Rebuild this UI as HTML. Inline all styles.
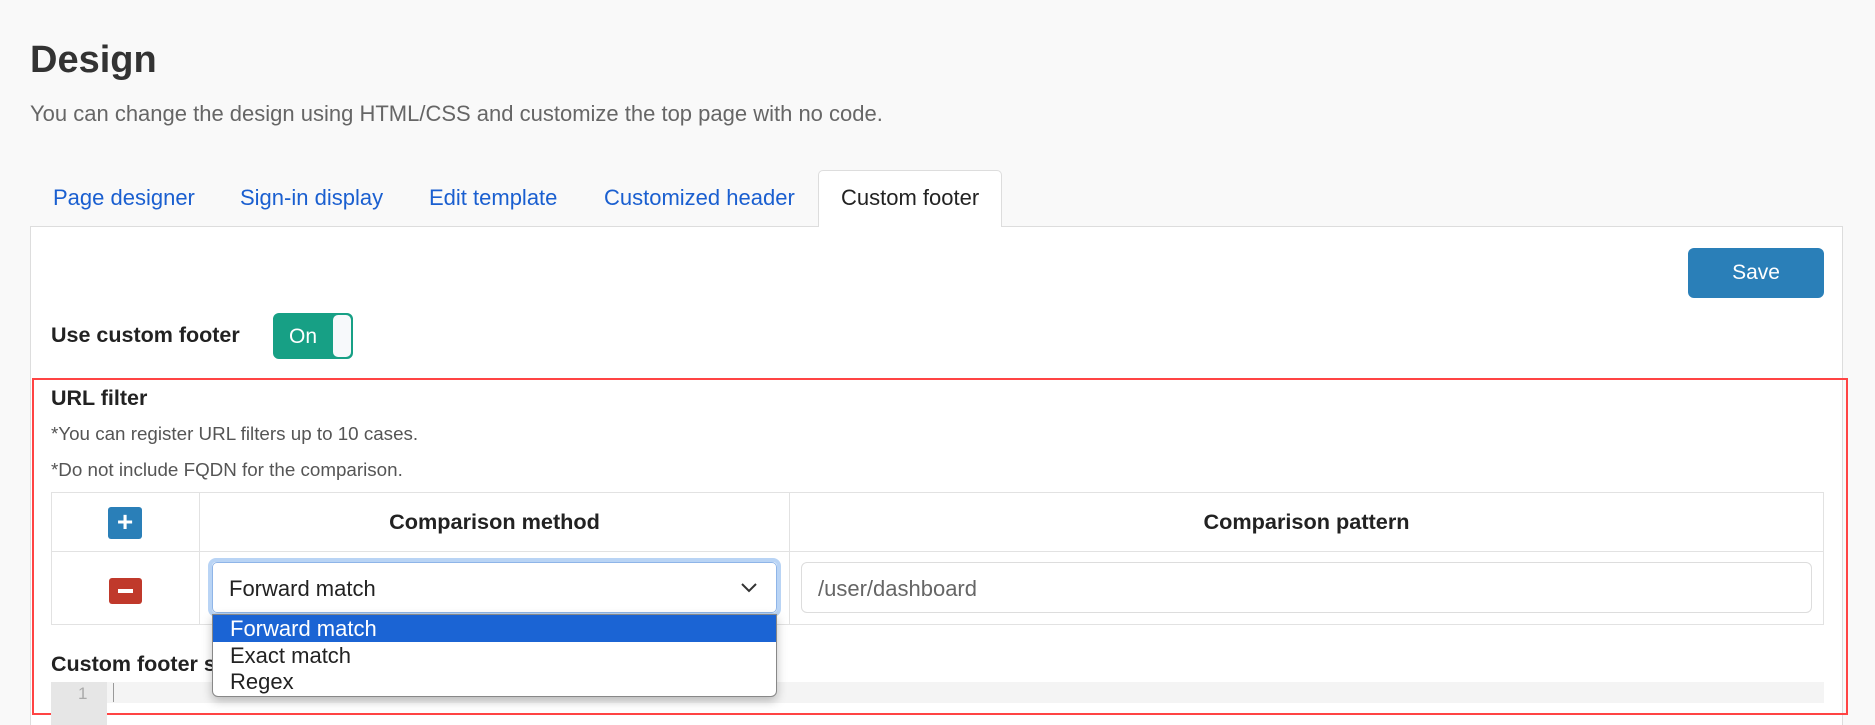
<!DOCTYPE html>
<html style="overflow:hidden;height:725px"><head><meta charset="utf-8"><style>
*{box-sizing:border-box;margin:0;padding:0}
body{width:1875px;height:725px;overflow:hidden;background:#f9f9f9;font-family:"Liberation Sans",Arial,sans-serif;color:#222;position:relative}
.a{position:absolute;white-space:nowrap}
h1{position:absolute;left:30px;top:39px;font-size:38px;font-weight:bold;color:#333}
.sub{left:30px;top:101px;font-size:22px;color:#666}
.tab{top:185px;font-size:22px;color:#1a5fd0}
.tabbox{position:absolute;left:818px;top:170px;width:184px;height:57px;background:#fff;border:1px solid #ddd;border-bottom:none;border-radius:5px 5px 0 0}
.panel{position:absolute;left:30px;top:226px;width:1813px;height:499px;background:#fff;border:1px solid #ddd;border-bottom:none}
.save{position:absolute;left:1688px;top:248px;width:136px;height:50px;background:#2a7fb8;border-radius:6px;color:#fff;font-size:21px;text-align:center;line-height:50px}
.toggle{position:absolute;left:273px;top:313px;width:80px;height:46px;background:#17a085;border-radius:6px;border:1px solid #17a085}
.toggle span{position:absolute;left:15px;top:11px;color:#fff;font-size:21px}
.toggle i{position:absolute;right:1px;top:1px;width:18px;height:42px;background:#f7f9fb;border-radius:5px}
.red{position:absolute;left:32px;top:378px;width:1816px;height:337px;border:2px solid #f44}
.small{font-size:18.8px;color:#555;left:51px}
table{position:absolute;left:51px;top:492px;width:1773px;border-collapse:collapse}
td{border:1px solid #e2e2e2}
.btn{position:absolute;border-radius:3px;color:#fff;text-align:center;font-weight:bold}
</style></head><body>
<h1>Design</h1>
<div class="a sub">You can change the design using HTML/CSS and customize the top page with no code.</div>
<div class="panel"></div>
<div class="tabbox"></div>
<div class="a tab" style="left:53px">Page designer</div>
<div class="a tab" style="left:240px">Sign-in display</div>
<div class="a tab" style="left:429px">Edit template</div>
<div class="a tab" style="left:604px">Customized header</div>
<div class="a tab" style="left:841px;color:#222">Custom footer</div>
<div class="save">Save</div>
<div class="a" style="left:51px;top:323px;font-size:21.5px;font-weight:bold">Use custom footer</div>
<div class="toggle"><span>On</span><i></i></div>
<div class="red"></div>
<div class="a" style="left:51px;top:386px;font-size:21.5px;font-weight:bold">URL filter</div>
<div class="a small" style="top:423px">*You can register URL filters up to 10 cases.</div>
<div class="a small" style="top:459px">*Do not include FQDN for the comparison.</div>
<table><tr style="height:59px"><td style="width:148px"></td><td style="width:590px;text-align:center;font-weight:bold;font-size:21.7px">Comparison method</td><td style="text-align:center;font-weight:bold;font-size:21.7px">Comparison pattern</td></tr>
<tr style="height:73px"><td></td><td></td><td></td></tr></table>
<div class="btn" style="left:108px;top:507px;width:34px;height:32px;background:#2a7fb8;font-size:28px;line-height:30px">+</div>
<div class="btn" style="left:109px;top:578px;width:33px;height:26px;background:#c0392b"><div style="position:absolute;left:9px;top:11px;width:15px;height:4px;background:#fff"></div></div>
<div style="position:absolute;left:208px;top:558px;width:573px;height:59px;border:4px solid #b9d4f5;border-radius:8px"></div>
<div style="position:absolute;left:212px;top:562px;width:565px;height:51px;border:1px solid #8fb5e8;border-radius:5px;background:#fff"></div>
<div class="a" style="left:229px;top:576px;font-size:22px;color:#222">Forward match</div>
<svg class="a" style="left:741px;top:583px" width="16" height="10"><path d="M1 1L8 8L15 1" stroke="#333" stroke-width="2" fill="none"/></svg>
<div style="position:absolute;left:801px;top:562px;width:1011px;height:51px;border:1px solid #ddd;border-radius:6px"></div>
<div class="a" style="left:818px;top:576px;font-size:22px;color:#666">/user/dashboard</div>
<div class="a" style="left:51px;top:652px;font-size:21.5px;font-weight:bold">Custom footer s</div>
<div style="position:absolute;left:51px;top:682px;width:1773px;height:21px;background:#f4f4f4"></div>
<div style="position:absolute;left:51px;top:682px;width:56px;height:43px;background:#e6e6e6"></div>
<div class="a" style="left:78px;top:684px;font-size:17px;color:#aaa">1</div>
<div style="position:absolute;left:113px;top:683px;width:1px;height:19px;background:#999"></div>
<div style="position:absolute;left:212px;top:614px;width:565px;height:83px;background:#fff;border:1px solid #888;border-radius:0 0 6px 6px;box-shadow:0 4px 10px rgba(0,0,0,.25)">
<div style="height:27px;background:#1b64d4;color:#fff;font-size:22px;padding-left:17px;line-height:27px">Forward match</div>
<div style="font-size:22px;padding-left:17px;line-height:27px;color:#222">Exact match</div>
<div style="font-size:22px;padding-left:17px;line-height:26px;color:#222">Regex</div>
</div>
</body></html>
